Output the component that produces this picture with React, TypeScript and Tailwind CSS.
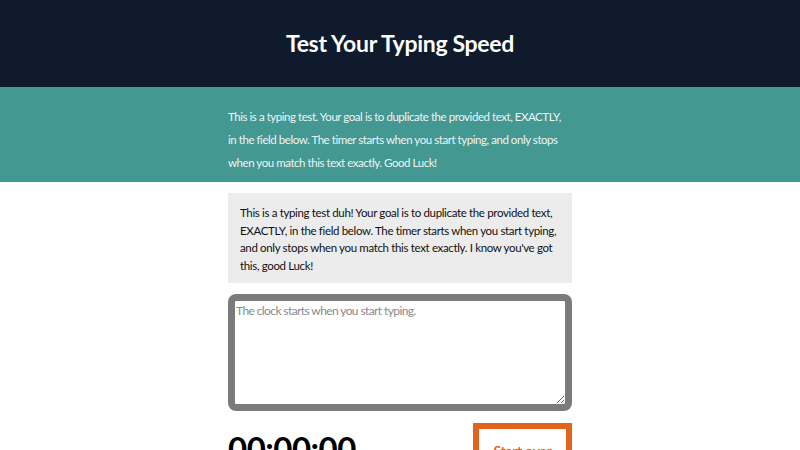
import React from "react";

export default function App() {
  return (
    <div className="h-[450px] overflow-hidden bg-white font-['Lato','Noto_Sans',sans-serif]">
      <header className="h-[87px] bg-[#0f1b2d] flex items-center justify-center">
        <h1 className="text-[23px] font-bold text-white leading-none tracking-[-0.3px]">Test Your Typing Speed</h1>
      </header>
      <section className="h-[95px] bg-[#439891]">
        <p className="w-[344px] mx-auto pt-[18px] text-[11.5px] leading-[23px] text-[#eef5f4] tracking-[-0.45px] whitespace-nowrap">
          This is a typing test. Your goal is to duplicate the provided text, EXACTLY,
          <br />
          in the field below. The timer starts when you start typing, and only stops
          <br />
          when you match this text exactly. Good Luck!
        </p>
      </section>
      <main className="w-[344px] mx-auto pt-[11px] flex flex-col">
        <div className="bg-[#ececec] pl-3 pr-2 pt-[11px] pb-[9px] text-[11.5px] leading-[17.5px] text-[#111] tracking-[-0.35px] whitespace-nowrap">
          This is a typing test duh! Your goal is to duplicate the provided text,
          <br />
          EXACTLY, in the field below. The timer starts when you start typing,
          <br />
          and only stops when you match this text exactly. I know you've got
          <br />
          this, good Luck!
        </div>
        <textarea
          className="mt-[11px] h-[117px] w-full border-[7px] border-[#7b7b7b] rounded-lg px-[1px] py-[2px] text-[12px] tracking-[-0.6px] leading-[16px] placeholder:text-[#8a8a8a] outline-none resize-y"
          placeholder="The clock starts when you start typing."
        />
        <div className="mt-[12px] flex justify-between items-start">
          <div className="mt-[9px] text-[33px] font-bold leading-none text-black tracking-[-0.5px]">00:00:00</div>
          <button className="w-[99px] h-[50px] border-[6px] border-[#e2641c] text-[#e2641c] font-bold text-[14px] tracking-[-0.3px] flex items-start justify-center pt-[11px]">
            Start over
          </button>
        </div>
      </main>
    </div>
  );
}
